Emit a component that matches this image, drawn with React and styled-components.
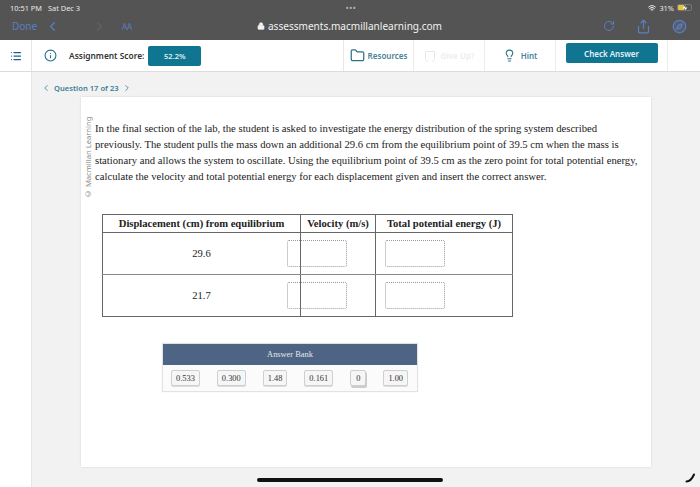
import React from 'react';
import styled, { createGlobalStyle } from 'styled-components';
import { ChevronLeft, ChevronRight, Lock, RotateCw, Share, Compass, Wifi, Info, Folder, Lightbulb, List, Zap } from 'lucide-react';

const Global = createGlobalStyle`
  * { box-sizing: border-box; }
  html, body { margin: 0; padding: 0; background: #f2f2f2; }
  body { font-family: 'Noto Sans', 'Open Sans', sans-serif; }
`;

const Page = styled.div`
  position: relative;
  width: 700px;
  height: 487px;
  overflow: hidden;
  background: #f2f2f2;
  display: flex;
  flex-direction: column;
`;

const BrowserBar = styled.div`
  height: 40px;
  background: #545454;
  display: flex;
  flex-direction: column;
  color: #fff;
`;

const StatusRow = styled.div`
  height: 15px;
  display: grid;
  grid-template-columns: 1fr auto 1fr;
  align-items: center;
  padding: 0 8px 0 10px;
  font-size: 7.4px;
  color: #e8e8e8;
`;

const Clock = styled.div`
  display: flex;
  gap: 6px;
`;

const Dots = styled.div`
  font-size: 8px;
  letter-spacing: 0.5px;
  line-height: 6px;
  color: #bbb;
`;

const Battery = styled.div`
  display: flex;
  justify-content: flex-end;
  align-items: center;
  gap: 3px;
`;

const BatteryCell = styled.div`
  position: relative;
  width: 15px;
  height: 7px;
  border-radius: 2px;
  border: 1px solid #777;
  overflow: hidden;
  color: #fff;
  display: flex;
  align-items: center;
  justify-content: center;
  &::before {
    content: '';
    position: absolute;
    left: 0;
    top: 0;
    width: 6px;
    height: 100%;
    background: #e6c440;
  }
  svg {
    position: relative;
  }
`;

const NavRow = styled.div`
  flex: 1;
  display: grid;
  grid-template-columns: 1fr auto 1fr;
  align-items: center;
  padding: 0 13px 3px 12px;
  color: #5a7fc0;
`;

const NavLeft = styled.div`
  display: flex;
  align-items: center;
`;

const DoneLabel = styled.span`
  font-size: 10px;
  width: 33px;
`;

const NavIcons = styled.div`
  display: flex;
  align-items: center;
  gap: 32px;
  width: 77px;
`;

const AaLabel = styled.span`
  font-size: 8px;
`;

const Address = styled.div`
  display: flex;
  align-items: center;
  gap: 3px;
  color: #f2f2f2;
  font-size: 10.05px;
`;

const RightIcons = styled.div`
  display: flex;
  justify-content: flex-end;
  align-items: center;
  gap: 21px;
`;

const Toolbar = styled.div`
  height: 32px;
  background: #fff;
  border-bottom: 1px solid #dcdcdc;
  display: flex;
  align-items: stretch;
`;

const MenuCell = styled.div`
  width: 32px;
  border-right: 1px solid #e6e6e6;
  display: flex;
  align-items: center;
  justify-content: center;
  color: #1a5f86;
`;

const ScoreCell = styled.div`
  width: 312px;
  display: flex;
  align-items: center;
  padding-left: 12px;
  border-right: 1px solid #e8e8e8;
  color: #1f6f8b;
`;

const ScoreLabel = styled.span`
  margin-left: 12px;
  font-size: 8.4px;
  font-weight: 600;
  color: #333;
`;

const ScoreBadge = styled.div`
  width: 53px;
  height: 20px;
  margin-left: 4px;
  border-radius: 2px;
  background: #107590;
  color: #dfeef2;
  font-size: 7.6px;
  font-weight: 600;
  display: flex;
  align-items: center;
  justify-content: center;
`;

const ToolCell = styled.div`
  width: ${(p) => p.$w}px;
  display: flex;
  align-items: center;
  justify-content: center;
  gap: ${(p) => p.$gap}px;
  border-right: 1px solid #ececec;
  color: ${(p) => (p.$off ? '#e8e8e8' : '#2d7288')};
  font-size: 8px;
  font-weight: 600;
`;

const ToolText = styled.span`
  color: ${(p) => (p.$off ? '#ededed' : '#4a8297')};
`;

const CheckCell = styled.div`
  width: 112px;
  border-right: 1px solid #ececec;
  display: flex;
  justify-content: center;
  padding-top: 3px;
`;

const CheckButton = styled.div`
  width: 92px;
  height: 20px;
  border-radius: 2px;
  background: #107590;
  color: #e4f1f4;
  font-size: 8px;
  font-weight: 600;
  display: flex;
  align-items: center;
  justify-content: center;
`;

const Body = styled.div`
  flex: 1;
  display: flex;
`;

const Rail = styled.div`
  width: 32px;
  background: #fff;
  border-right: 1px solid #e6e6e6;
`;

const Main = styled.div`
  flex: 1;
  padding-left: 8px;
`;

const QuestionNav = styled.div`
  height: 25px;
  display: flex;
  align-items: center;
  gap: 3px;
  font-size: 7.6px;
  font-weight: 600;
  color: #3c7f96;
  padding: 7px 0 0 1px;
`;

const Card = styled.div`
  width: 570px;
  height: 370px;
  margin-left: 41px;
  background: #fff;
  box-shadow: 0 0 2px rgba(0, 0, 0, 0.12);
  display: flex;
  flex-direction: column;
  align-items: flex-start;
`;

const Intro = styled.div`
  display: flex;
  padding: 18px 0 0 2px;
  height: 100px;
`;

const Credit = styled.div`
  writing-mode: vertical-rl;
  transform: rotate(180deg);
  font-size: 7.6px;
  color: #8c8c8c;
  width: 10px;
  height: 84px;
  line-height: 10px;
  white-space: nowrap;
`;

const Prompt = styled.div`
  margin: 6px 0 0 2px;
  width: 550px;
  font-family: 'Liberation Serif', serif;
  font-size: 10.66px;
  line-height: 16px;
  color: #222;
  white-space: nowrap;
`;

const Table = styled.table`
  margin: 17px 0 0 21px;
  width: 410px;
  border-collapse: collapse;
  table-layout: fixed;
  font-family: 'Liberation Serif', serif;
  color: #222;
`;

const Th = styled.th`
  height: 18px;
  padding: 0;
  border: 1px solid #666;
  font-size: 10.6px;
  font-weight: bold;
  width: ${(p) => p.$w}px;
`;

const Td = styled.td`
  height: 42px;
  padding: 0;
  border: 1px solid #666;
  border-bottom-color: ${(p) => (p.$last ? '#666' : '#888')};
  font-size: 10.6px;
  text-align: center;
  vertical-align: middle;
`;

const DropRow = styled.div`
  display: flex;
  justify-content: flex-start;
  padding-left: ${(p) => p.$x}px;
`;

const DropBox = styled.div`
  flex: none;
  width: 60px;
  height: 27px;
  border: 1px dotted #999;
  border-radius: 2px;
  margin-left: ${(p) => p.$shift || 0}px;
  position: relative;
`;

const Bank = styled.div`
  margin: 26px 0 0 81px;
  width: 256px;
  border: 1px solid #e2e2e2;
  box-shadow: 0 0 1px rgba(0, 0, 0, 0.1);
  font-family: 'Liberation Serif', serif;
`;

const BankTitle = styled.div`
  height: 21px;
  background: #4d6484;
  color: #e4e8ee;
  font-size: 8.4px;
  display: flex;
  align-items: center;
  justify-content: center;
`;

const BankItems = styled.div`
  height: 26px;
  display: flex;
  align-items: center;
  gap: 17px;
  padding-left: 8px;
  background: #fbfbfb;
`;

const Chip = styled.div`
  height: 16px;
  padding: 0 ${(p) => (p.$raised ? 5 : 4)}px;
  border: 1px solid #cfcfcf;
  border-radius: 2px;
  background: #f6f6f6;
  color: #333;
  font-size: 8.4px;
  display: flex;
  align-items: center;
  box-shadow: ${(p) => (p.$raised ? '1px 2px 0 #ccc' : '0 1px 0 #ddd')};
`;

const HomeBar = styled.div`
  position: absolute;
  left: 257px;
  top: 478px;
  width: 186px;
  height: 4px;
  border-radius: 2px;
  background: #111;
`;

const PencilMark = styled.svg`
  position: absolute;
  left: 685px;
  top: 473px;
`;

const rows = ['29.6', '21.7'];

const answers = ['0.533', '0.300', '1.48', '0.161', '0', '1.00'];

export default function App() {
  return (
    <Page>
      <Global />
      <BrowserBar>
        <StatusRow>
          <Clock>
            <span>10:51 PM</span>
            <span>Sat Dec 3</span>
          </Clock>
          <Dots>•••</Dots>
          <Battery>
            <Wifi size={8} strokeWidth={3} />
            <span>31%</span>
            <BatteryCell>
              <Zap size={6} fill="#fff" strokeWidth={0} />
            </BatteryCell>
          </Battery>
        </StatusRow>
        <NavRow>
          <NavLeft>
            <DoneLabel>Done</DoneLabel>
            <NavIcons>
              <ChevronLeft size={15} />
              <ChevronRight size={15} color="#626262" />
            </NavIcons>
            <AaLabel>AA</AaLabel>
          </NavLeft>
          <Address>
            <Lock size={8} fill="#f2f2f2" />
            assessments.macmillanlearning.com
          </Address>
          <RightIcons>
            <RotateCw size={12} />
            <Share size={15} />
            <Compass size={15} fill="rgba(90,127,192,0.25)" />
          </RightIcons>
        </NavRow>
      </BrowserBar>
      <Toolbar>
        <MenuCell>
          <List size={12} strokeWidth={2.5} />
        </MenuCell>
        <ScoreCell>
          <Info size={13} />
          <ScoreLabel>Assignment Score:</ScoreLabel>
          <ScoreBadge>52.2%</ScoreBadge>
        </ScoreCell>
        <ToolCell $w={70} $gap={3}>
          <Folder size={15} />
          <ToolText>Resources</ToolText>
        </ToolCell>
        <ToolCell $w={71} $gap={5} $off>
          <svg width="12" height="12" viewBox="0 0 12 12" fill="none" stroke="currentColor">
            <path d="M1.5 9.5 V1.5 H10.5 V9.5 M8 11 H10.5 M1.5 11 H4" />
          </svg>
          <ToolText $off>Give Up?</ToolText>
        </ToolCell>
        <ToolCell $w={71} $gap={5}>
          <Lightbulb size={13} />
          <ToolText>Hint</ToolText>
        </ToolCell>
        <CheckCell>
          <CheckButton>Check Answer</CheckButton>
        </CheckCell>
      </Toolbar>
      <Body>
        <Rail />
        <Main>
          <QuestionNav>
            <ChevronLeft size={10} />
            Question 17 of 23
            <ChevronRight size={10} />
          </QuestionNav>
          <Card>
            <Intro>
              <Credit>© Macmillan Learning</Credit>
              <Prompt>
                In the final section of the lab, the student is asked to investigate the energy distribution of the spring system described
                <br />
                previously. The student pulls the mass down an additional 29.6 cm from the equilibrium point of 39.5 cm when the mass is
                <br />
                stationary and allows the system to oscillate. Using the equilibrium point of 39.5 cm as the zero point for total potential energy,
                <br />
                calculate the velocity and total potential energy for each displacement given and insert the correct answer.
              </Prompt>
            </Intro>
            <Table>
              <thead>
                <tr>
                  <Th $w={198}>Displacement (cm) from equilibrium</Th>
                  <Th $w={75}>Velocity (m/s)</Th>
                  <Th $w={137}>Total potential energy (J)</Th>
                </tr>
              </thead>
              <tbody>
                {rows.map((d, i) => (
                  <tr key={d}>
                    <Td $last={i === 1}>{d}</Td>
                    <Td $last={i === 1}>
                      <DropRow $x={0}>
                        <DropBox $shift={-14} />
                      </DropRow>
                    </Td>
                    <Td $last={i === 1}>
                      <DropRow $x={9}>
                        <DropBox />
                      </DropRow>
                    </Td>
                  </tr>
                ))}
              </tbody>
            </Table>
            <Bank>
              <BankTitle>Answer Bank</BankTitle>
              <BankItems>
                {answers.map((a) => (
                  <Chip key={a} $raised={a === '0'}>
                    {a}
                  </Chip>
                ))}
              </BankItems>
            </Bank>
          </Card>
        </Main>
      </Body>
      <HomeBar />
      <PencilMark width="12" height="10" viewBox="0 0 12 10">
        <path d="M1.5 8.5 C5 8.5 7 6 9 1.5" stroke="#111" strokeWidth="2" fill="none" strokeLinecap="round" />
      </PencilMark>
    </Page>
  );
}
